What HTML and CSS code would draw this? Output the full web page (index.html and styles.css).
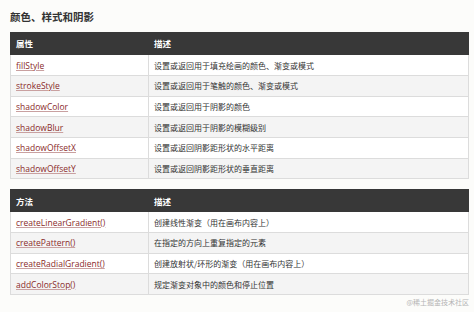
FILE: index.html
```html
<!DOCTYPE html>
<html lang="zh">
<head>
<meta charset="utf-8">
<link rel="stylesheet" href="styles.css">
</head>
<body>
<div class="page">
  <h2 class="title">颜色、样式和阴影</h2>
  <table class="ref">
    <thead><tr><th class="c1">属性</th><th>描述</th></tr></thead>
    <tbody>
      <tr><td class="c1"><a>fillStyle</a></td><td>设置或返回用于填充绘画的颜色、渐变或模式</td></tr>
      <tr><td class="c1"><a>strokeStyle</a></td><td>设置或返回用于笔触的颜色、渐变或模式</td></tr>
      <tr><td class="c1"><a>shadowColor</a></td><td>设置或返回用于阴影的颜色</td></tr>
      <tr><td class="c1"><a>shadowBlur</a></td><td>设置或返回用于阴影的模糊级别</td></tr>
      <tr><td class="c1"><a>shadowOffsetX</a></td><td>设置或返回阴影距形状的水平距离</td></tr>
      <tr><td class="c1"><a>shadowOffsetY</a></td><td>设置或返回阴影距形状的垂直距离</td></tr>
    </tbody>
  </table>
  <table class="ref second">
    <thead><tr><th class="c1">方法</th><th>描述</th></tr></thead>
    <tbody>
      <tr><td class="c1"><a>createLinearGradient()</a></td><td>创建线性渐变（用在画布内容上）</td></tr>
      <tr><td class="c1"><a>createPattern()</a></td><td>在指定的方向上重复指定的元素</td></tr>
      <tr><td class="c1"><a>createRadialGradient()</a></td><td>创建放射状/环形的渐变（用在画布内容上）</td></tr>
      <tr><td class="c1"><a>addColorStop()</a></td><td>规定渐变对象中的颜色和停止位置</td></tr>
    </tbody>
  </table>
  <div class="mark">@稀土掘金技术社区</div>
</div>
</body>
</html>
```
FILE: styles.css
```css
html, body {
  margin: 0;
  padding: 0;
  background: #fcfcfa;
}
.page {
  width: 474px;
  height: 312px;
  box-sizing: border-box;
  padding: 10px 5px 0 10px;
  font-family: "Noto Sans CJK SC", sans-serif;
  color: #333;
  overflow: hidden;
}
.title {
  margin: 0;
  height: 21.7px;
  font-size: 10.5px;
  line-height: 14px;
  font-weight: bold;
  color: #333;
}
.ref {
  width: 459px;
  border-collapse: collapse;
  border: 1px solid #dcdcdc;
  background: #fff;
}
.ref.second {
  margin-top: 9.4px;
}
.ref th {
  background: #383838;
  color: #fff;
  font-size: 8.5px;
  font-weight: bold;
  text-align: left;
  height: 21.6px;
  padding: 0 5px;
  border: 1px solid #383838;
}
.ref td {
  height: 20.7px;
  padding: 0 5px;
  font-size: 8px;
  color: #333;
  border: 1px solid #dcdcdc;
  box-sizing: border-box;
}
.ref tbody tr:nth-child(even) td {
  background: #f4f4f4;
}
.ref .c1 {
  width: 138px;
  box-sizing: border-box;
}
.ref a {
  font-family: "Open Sans", sans-serif;
  font-size: 8.5px;
  color: #8a2a2a;
  text-decoration: underline;
  text-decoration-color: #c9a0a0;
}
.mark {
  text-align: right;
  padding-right: 0;
  margin-top: 1px;
  font-size: 7px;
  line-height: 12px;
  color: #b5b5b5;
  height: 17px;
  border-bottom: 1px solid #eeeeea;
}
```
